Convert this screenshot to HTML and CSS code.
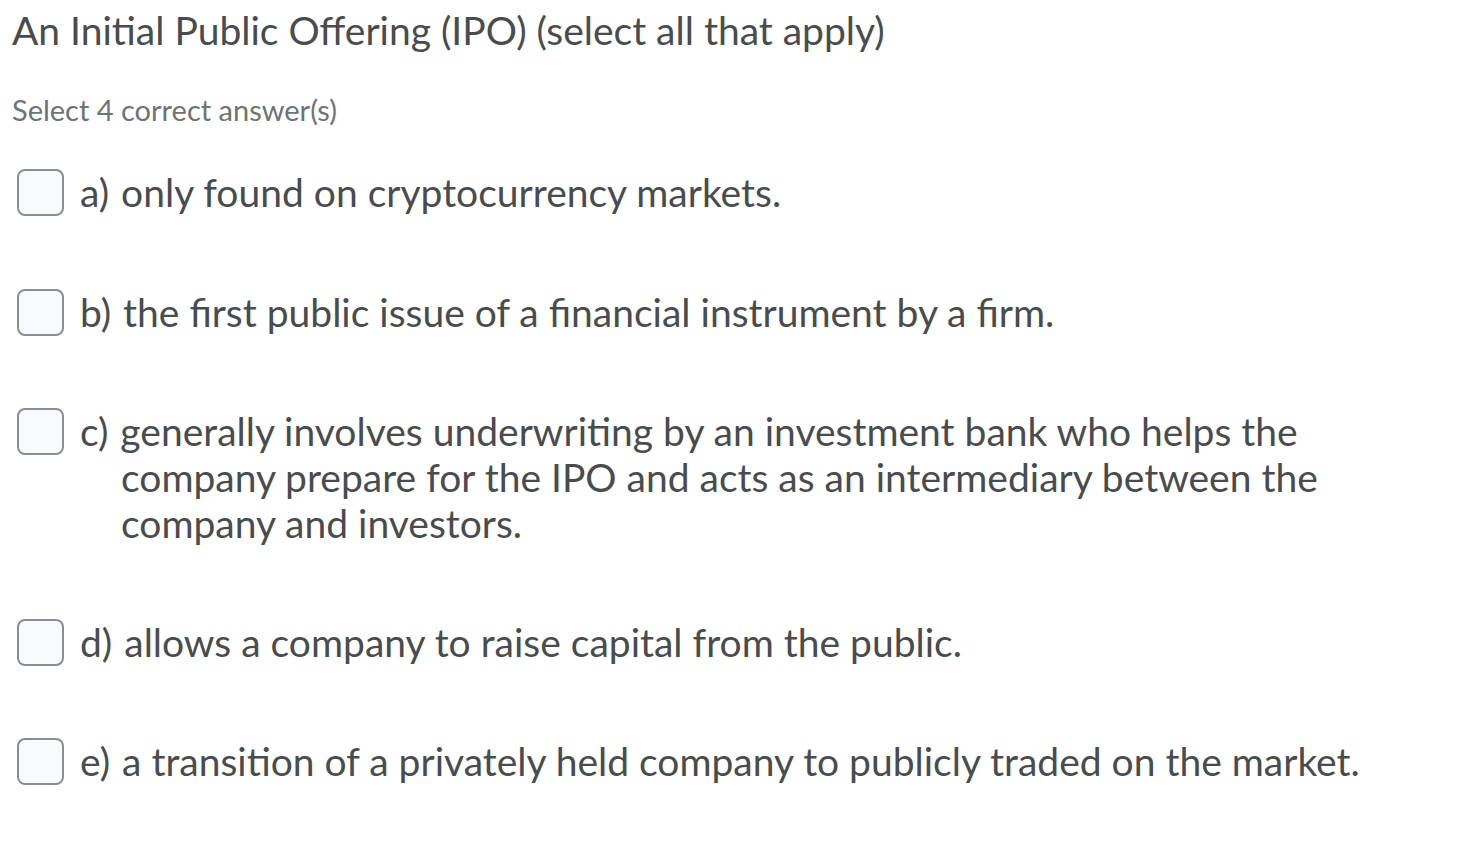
FILE: index.html
```html
<!DOCTYPE html>
<html>
<head>
<meta charset="utf-8">
<link rel="stylesheet" href="styles.css">
</head>
<body>
<div class="quiz">
  <h1 class="title">An Initial Public Offering (IPO) (select all that apply)</h1>
  <p class="hint">Select 4 correct answer(s)</p>
  <ul class="options">
    <li class="option"><span class="box"></span><span class="text"><span class="letter">a)</span> only found on cryptocurrency markets.</span></li>
    <li class="option"><span class="box"></span><span class="text"><span class="letter">b)</span> the first public issue of a financial instrument by a firm.</span></li>
    <li class="option"><span class="box"></span><span class="text"><span class="letter">c)</span> generally involves underwriting by an investment bank who helps the company prepare for the IPO and acts as an intermediary between the company and investors.</span></li>
    <li class="option"><span class="box"></span><span class="text"><span class="letter">d)</span> allows a company to raise capital from the public.</span></li>
    <li class="option"><span class="box"></span><span class="text"><span class="letter">e)</span> a transition of a privately held company to publicly traded on the market.</span></li>
  </ul>
</div>
</body>
</html>
```

FILE: styles.css
```css
html, body {
  margin: 0;
  padding: 0;
  background: #ffffff;
}
body {
  font-family: Lato, "Open Sans", sans-serif;
  color: #494c4e;
}
.quiz {
  padding: 6px 0 0 12px;
  width: 1420px;
}
.title {
  margin: 0;
  font-size: 39px;
  font-weight: 400;
  line-height: 48px;
}
.hint {
  margin: 38px 0 0 0;
  font-size: 29px;
  line-height: 36px;
  color: #6e7376;
}
.options {
  list-style: none;
  margin: 41px 0 0 0;
  padding: 0;
  display: flex;
  flex-direction: column;
  gap: 72.5px;
}
.option {
  display: flex;
  align-items: flex-start;
  font-size: 39px;
  line-height: 46px;
}
.box {
  flex: none;
  width: 43px;
  height: 43px;
  border: 2px solid #8a8e92;
  border-radius: 8px;
  background: #f9fafe;
  margin: 0 16px 0 5px;
  box-sizing: content-box;
}
.text {
  flex: 1;
  padding-left: 41px;
  text-indent: -41px;
}
.letter {
  margin-right: 2px;
}
```
